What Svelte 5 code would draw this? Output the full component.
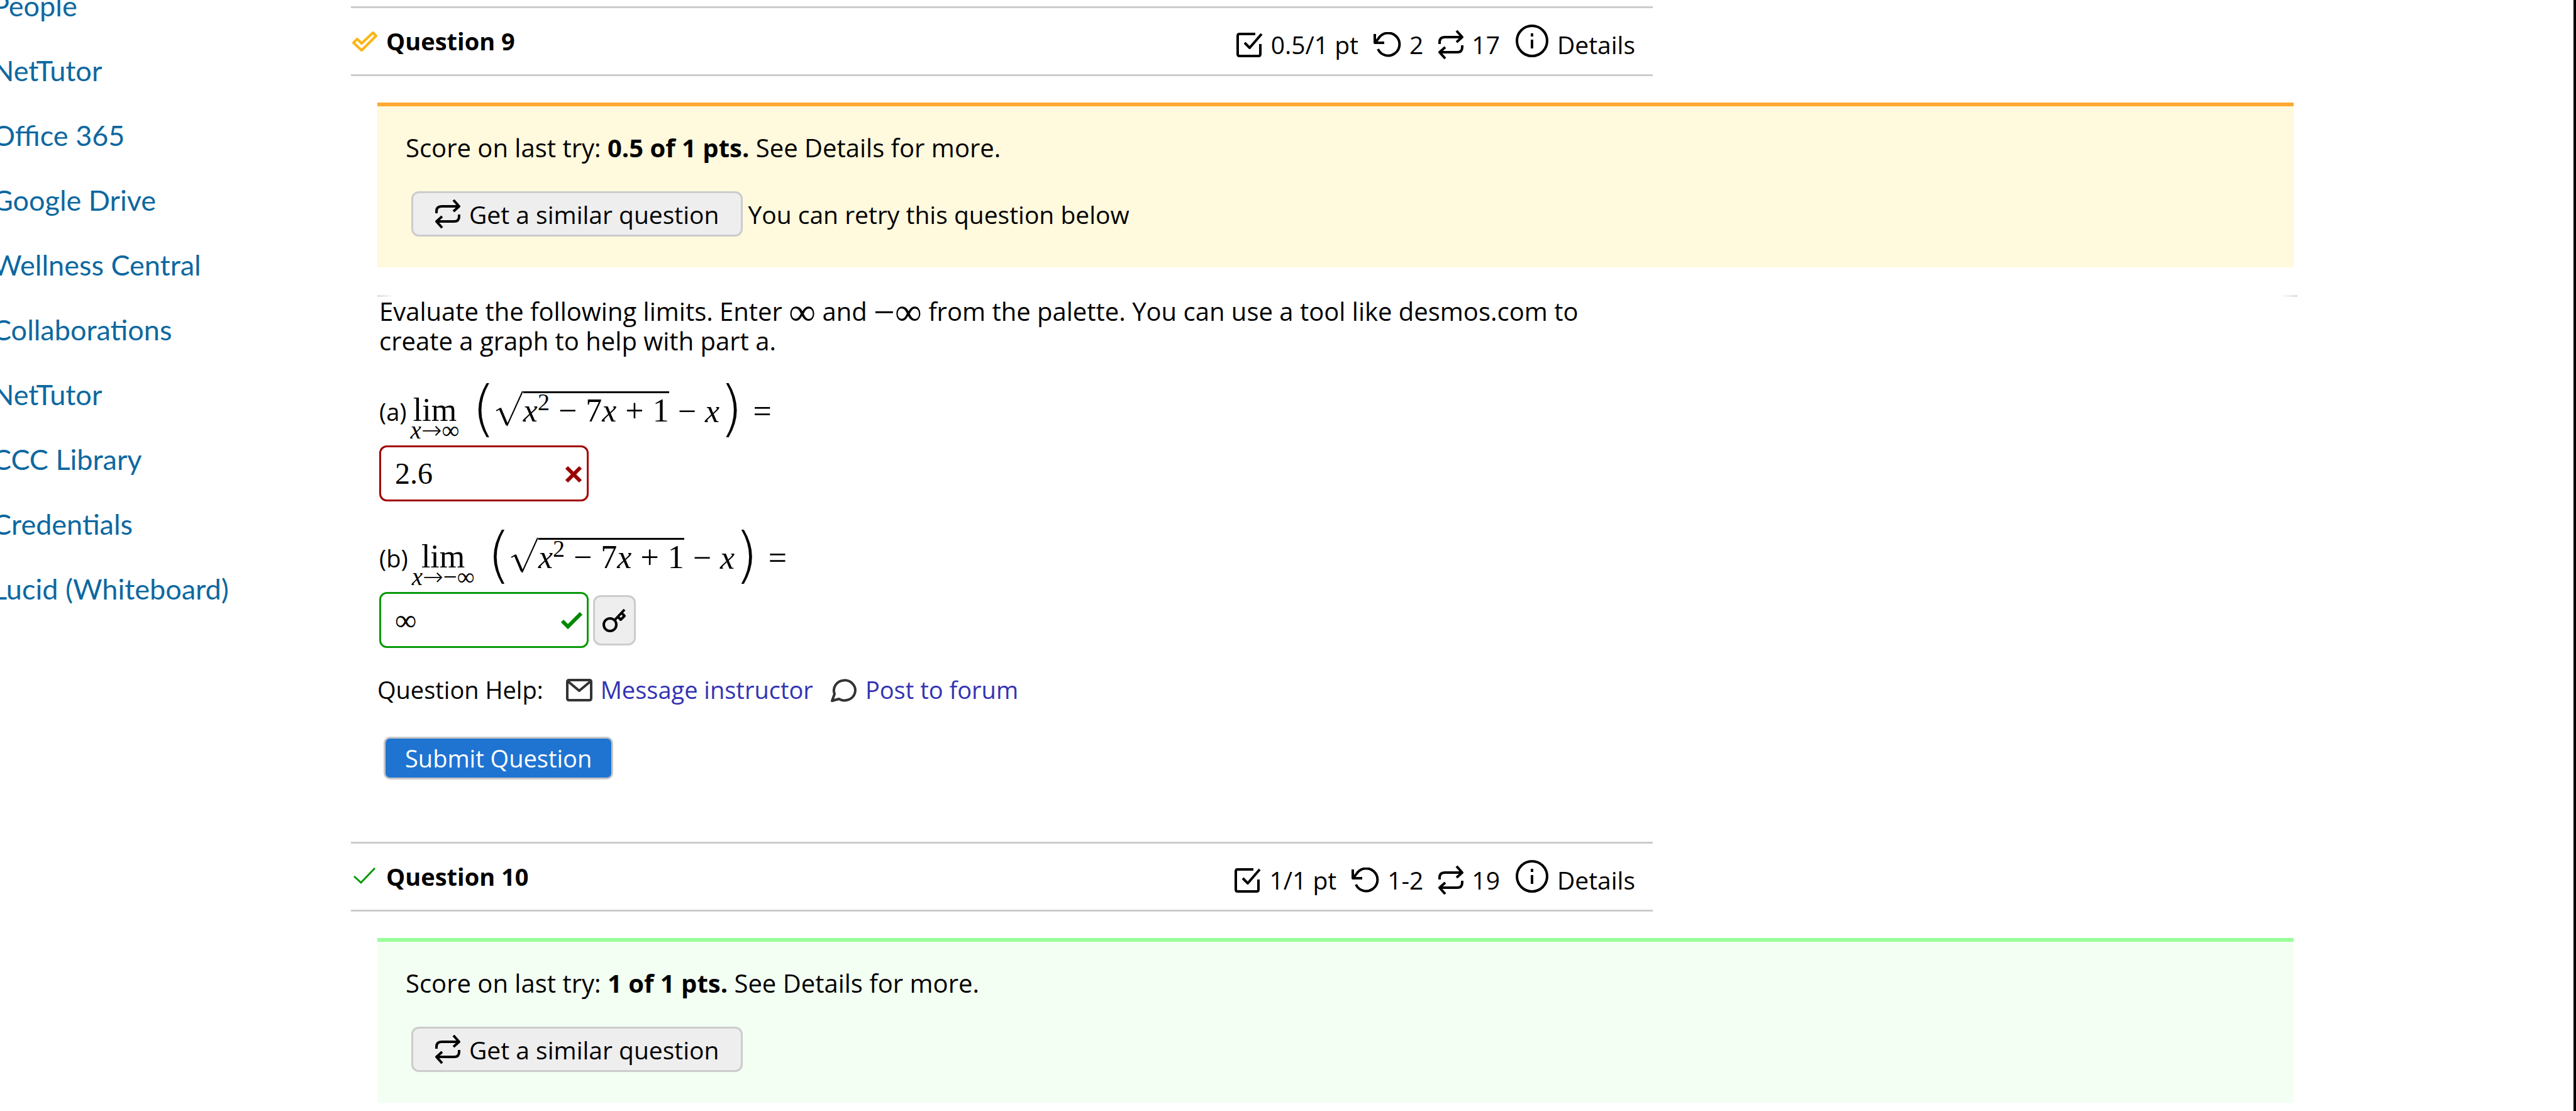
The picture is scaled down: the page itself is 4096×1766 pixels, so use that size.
<script>
  const links = [
    'People',
    'NetTutor',
    'Office 365',
    'Google Drive',
    'Wellness Central',
    'Collaborations',
    'NetTutor',
    'CCC Library',
    'Credentials',
    'Lucid (Whiteboard)'
  ];

  let answerA = '2.6';
  let answerB = '∞';
</script>

{#snippet repeatIcon()}
  <svg class="icon" width="40" height="46" viewBox="0 0 40 46">
    <path d="M2 22v-3q0-8 8-8h28M29 1l9 10-9 8" />
    <path d="M38 24v3q0 8-8 8H2M11 27l-9 8 9 10" />
  </svg>
{/snippet}

{#snippet header(number, score, tries, versions, full)}
  <header>
    {#if full}
      <svg class="status" width="40" height="32" viewBox="0 0 40 32" fill="none" stroke="#090" stroke-width="3">
        <path d="M3 15l11 10L36 2" />
      </svg>
    {:else}
      <svg class="status" width="40" height="32" viewBox="0 0 40 32" fill="none" stroke="#fdb515" stroke-width="4" stroke-linejoin="round">
        <path d="M2 18l6-6 7 7L33 2l5 5-23 23z" />
      </svg>
    {/if}
    <h2>Question {number}</h2>
    <div class="stats">
      <span>
        <svg class="icon" width="42" height="40" viewBox="0 0 42 40">
          <path d="M30 3H5q-3 0-3 3v29q0 3 3 3h30q3 0 3-3V19M13 17l8 8L40 3" />
        </svg>
        {score} pt
      </span>
      <span>
        <svg class="icon" width="44" height="40" viewBox="0 0 44 40">
          <path d="M2 3v14h15M3 16l5-6a18 18 0 1 1-1 17" />
        </svg>
        {tries}
      </span>
      <span>{@render repeatIcon()} {versions}</span>
      <button class="details">
        <svg class="icon" width="54" height="54" viewBox="0 0 54 54">
          <circle cx="27" cy="27" r="24" />
          <path d="M27 15v5M27 25v14" />
        </svg>
        Details
      </button>
    </div>
  </header>
{/snippet}

{#snippet limit(part, target)}
  <div class="math">
    <span class="part">({part})</span>
    <span class="lim">
      <span>lim</span>
      <span class="under"><i>x</i><span class="arrow">→</span>{target}</span>
    </span>
    <span class="paren">(</span>
    <span class="root">
      <svg width="44" height="58" viewBox="0 0 44 58" fill="none" stroke="#000">
        <path d="M1 32l7-4" stroke-width="2" />
        <path d="M7 28l11 26" stroke-width="4" />
        <path d="M18 56L43 1" stroke-width="2" />
      </svg>
      <span class="radicand"><i>x</i><sup>2</sup><span class="op">−</span>7<i>x</i><span class="op">+</span>1</span>
    </span>
    <span class="op">−</span>
    <i>x</i>
    <span class="paren">)</span>
    <span class="equals">=</span>
  </div>
{/snippet}

<div class="page">
  <nav>
    {#each links as link}
      <a href="#top">{link}</a>
    {/each}
  </nav>

  <main>
    <section>
      {@render header(9, '0.5/1', '2', '17', false)}
      <div class="score partial">
        <p>Score on last try: <b>0.5 of 1 pts.</b> See Details for more.</p>
        <div class="retry">
          <button>{@render repeatIcon()} Get a similar question</button>
          <span>You can retry this question below</span>
        </div>
      </div>

      <div class="edge"></div>

      <div class="question">
        <p>
          Evaluate the following limits. Enter <span class="inf">∞</span> and <span class="inf">−∞</span>
          from the palette. You can use a tool like desmos.com to create a graph to help with part a.
        </p>

        {@render limit('a', '∞')}
        <div class="answer wrong">
          <div class="field">
            <input type="text" aria-label="Part a" bind:value={answerA} />
            <svg width="28" height="28" viewBox="0 0 28 28" fill="none" stroke="#900" stroke-width="6">
              <path d="M3 3l22 22M25 3L3 25" />
            </svg>
          </div>
        </div>

        {@render limit('b', '−∞')}
        <div class="answer right">
          <div class="field">
            <input type="text" aria-label="Part b" bind:value={answerB} />
            <svg width="34" height="28" viewBox="0 0 34 28" fill="none" stroke="#080" stroke-width="6">
              <path d="M2 14l9 9L32 2" />
            </svg>
          </div>
          <button class="key" aria-label="Show answer">
            <svg class="icon" width="38" height="38" viewBox="0 0 38 38">
              <circle cx="12" cy="26" r="10" />
              <path d="M19 19L35 2M30 7l5 5-6 6-5-5" />
            </svg>
          </button>
        </div>

        <div class="help">
          <span>Question Help:</span>
          <a href="#message">
            <svg width="42" height="36" viewBox="0 0 42 36">
              <path d="M5 2h32q3 0 3 3v26q0 3-3 3H5q-3 0-3-3V5q0-3 3-3zM3 4l18 15L39 4" />
            </svg>
            Message instructor
          </a>
          <a href="#forum">
            <svg width="42" height="40" viewBox="0 0 42 40">
              <path d="M2 37l4-11a17 16 0 1 1 7 8z" />
            </svg>
            Post to forum
          </a>
        </div>

        <button class="submit">Submit Question</button>
      </div>
    </section>

    <section>
      {@render header(10, '1/1', '1-2', '19', true)}
      <div class="score correct">
        <p>Score on last try: <b>1 of 1 pts.</b> See Details for more.</p>
        <div class="retry">
          <button>{@render repeatIcon()} Get a similar question</button>
        </div>
      </div>
    </section>
  </main>
</div>

<style>
  :global(body) {
    margin: 0;
    background: #fff;
  }

  .page {
    display: flex;
    min-height: 100vh;
    box-sizing: border-box;
    overflow: hidden;
    border-right: 4px solid #000;
    color: #000;
    font: 500 39px/45px 'Open Sans', sans-serif;
  }

  nav {
    flex: none;
    display: flex;
    flex-direction: column;
    gap: 55px;
    box-sizing: border-box;
    width: 570px;
    margin-left: -12px;
    margin-top: -15px;
    font: 45px/48px Lato, sans-serif;
  }

  nav a {
    color: #0e68a0;
    text-decoration: none;
  }

  main {
    flex: 1;
    padding: 10px 445px 0 0;
  }

  p, h2 {
    margin: 0;
  }

  p {
    font-size: 40px;
  }

  button {
    font: inherit;
    color: inherit;
    cursor: pointer;
  }

  .icon {
    flex: none;
    fill: none;
    stroke: #000;
    stroke-width: 4;
    stroke-linejoin: round;
  }

  header {
    display: flex;
    align-items: center;
    box-sizing: border-box;
    max-width: 2070px;
    height: 111px;
    padding: 0 28px 0 2px;
    border-top: 3px solid #ccc;
    border-bottom: 3px solid #ccc;
  }

  h2 {
    font-size: 38px;
    font-weight: 700;
    margin-left: 14px;
  }

  .stats {
    display: flex;
    align-items: center;
    gap: 24px;
    margin-left: auto;
    padding-top: 10px;
  }

  .stats span, .details {
    display: flex;
    align-items: center;
    gap: 13px;
  }

  .details {
    border: 0;
    padding: 0;
    background: none;
  }

  .details svg {
    margin-bottom: 12px;
  }

  .score {
    margin: 42px 0 0 42px;
    padding: 43px 45px 49px;
    border-top: 6px solid;
  }

  .partial {
    background: #fff9dd;
    border-color: #ffaa33;
  }

  .correct {
    background: #f3fff3;
    border-color: #99ff99;
  }

  .retry {
    display: flex;
    align-items: center;
    gap: 8px;
    margin: 47px 0 0 9px;
  }

  .retry button {
    display: flex;
    align-items: center;
    gap: 14px;
    height: 72px;
    padding: 0 35px;
    border: 3px solid #ccc;
    border-radius: 12px;
    background: #eee;
  }

  .edge {
    height: 3px;
    margin: 44px -6px 0 42px;
    background:
      linear-gradient(90deg, #ddd, #fff) left / 27px 3px no-repeat,
      linear-gradient(270deg, #ddd, #fff) right / 27px 3px no-repeat;
  }

  .question {
    padding-left: 45px;
  }

  .question p {
    max-width: 1940px;
  }

  .inf {
    font: 60px/45px 'Liberation Serif', serif;
    vertical-align: -6px;
  }

  .math {
    display: flex;
    align-items: center;
    height: 88px;
    margin-top: 46px;
    font: 52px/56px 'Liberation Serif', serif;
  }

  .part {
    font: 500 38px/45px 'Open Sans', sans-serif;
  }

  .lim {
    display: flex;
    flex-direction: column;
    align-items: center;
    padding-top: 24px;
    margin: 0 20px 0 6px;
    line-height: 36px;
  }

  .under {
    font-size: 39px;
    line-height: 28px;
  }

  .arrow {
    font-family: 'DejaVu Sans', sans-serif;
    font-weight: 200;
  }

  .paren {
    font-family: 'DejaVu Sans', sans-serif;
    font-size: 96px;
    font-weight: 200;
    line-height: 78px;
    padding-bottom: 10px;
  }

  .root {
    display: flex;
    padding-bottom: 8px;
  }

  .radicand {
    height: 55px;
    margin-top: 1px;
    border-top: 3px solid #000;
  }

  sup {
    font-size: 38px;
    line-height: 1px;
  }

  .op {
    margin: 0 14px;
  }

  .equals {
    margin-left: 16px;
  }

  .answer {
    display: flex;
    align-items: center;
    gap: 7px;
    margin-top: 10px;
  }

  .field {
    position: relative;
    display: flex;
  }

  .field svg {
    position: absolute;
    right: 10px;
    top: 32px;
  }

  input {
    box-sizing: border-box;
    width: 333px;
    height: 89px;
    padding: 0 22px;
    border: 3px solid;
    border-radius: 12px;
    background: #fff;
    font: 48px 'Liberation Serif', serif;
  }

  .wrong input {
    border-color: #a00000;
  }

  .right input {
    border-color: #0a9a0a;
  }

  .key {
    display: flex;
    align-items: center;
    justify-content: center;
    width: 68px;
    height: 80px;
    padding: 0;
    border: 3px solid #ccc;
    border-radius: 12px;
    background: #eee;
  }

  .help {
    display: flex;
    align-items: center;
    gap: 28px;
    margin: 44px 0 0 -3px;
    font-size: 38px;
  }

  .help span {
    margin-right: 8px;
  }

  .help a {
    display: flex;
    align-items: center;
    gap: 13px;
    color: #3333b3;
    text-decoration: none;
  }

  .help svg {
    fill: none;
    stroke: #333;
    stroke-width: 4;
    stroke-linejoin: round;
  }

  .submit {
    height: 68px;
    margin: 52px 0 99px 7px;
    padding: 0 31px;
    border: 3px solid #c8c8c8;
    border-radius: 10px;
    background: #1f74d2;
    color: #fff;
    font-size: 38px;
  }
</style>
